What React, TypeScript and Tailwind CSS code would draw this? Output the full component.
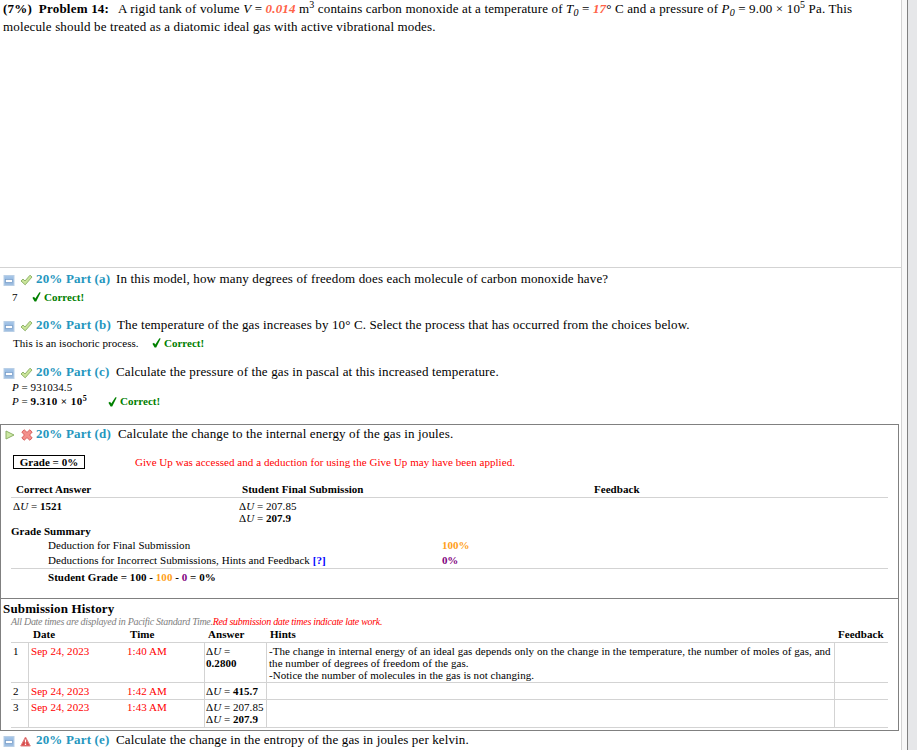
import type { ReactNode } from "react";

function CollapseIcon() {
  return (
    <svg className="block" width="12" height="11" viewBox="0 0 12 11">
      <defs>
        <linearGradient id="blue" x1="0" y1="0" x2="0" y2="1">
          <stop offset="0" stopColor="#a9c8ea" />
          <stop offset="0.6" stopColor="#8db3dc" />
          <stop offset="1" stopColor="#a5c2e2" />
        </linearGradient>
      </defs>
      <rect x="1" y="0.5" width="10" height="10" fill="url(#blue)" stroke="#b9cfe6" />
      <rect x="2.5" y="4.5" width="7" height="3" fill="#fff" stroke="#7299c6" strokeWidth="0.7" />
    </svg>
  );
}

function TickIcon() {
  return (
    <svg className="block" width="13" height="12" viewBox="0 0 13 12">
      <path d="M1 7 L3 5 L5 7 L10 1.2 L12 3 L5.2 10.8 Z" fill="#cbe59a" stroke="#91b56d" strokeWidth="1" strokeLinejoin="round" />
    </svg>
  );
}

function CrossIcon() {
  return (
    <svg className="block" width="12" height="12" viewBox="0 0 12 12">
      <path d="M3.2 .8 L6 3.4 L8.8 .8 L11.2 3 L8.6 6 L11.2 9 L8.8 11.2 L6 8.6 L3.2 11.2 L.8 9 L3.4 6 L.8 3 Z" fill="#f3908b" stroke="#d45656" strokeWidth="0.9" />
    </svg>
  );
}

function PlayIcon() {
  return (
    <svg className="ml-[1px] block" width="10" height="10" viewBox="0 0 10 10">
      <path d="M1 1 L9 5 L1 9 Z" fill="#cde9a5" stroke="#8db167" strokeLinejoin="round" />
    </svg>
  );
}

function WarnIcon() {
  return (
    <svg className="block" width="11" height="11" viewBox="0 0 11 11">
      <path d="M5.5 1 L10.3 10 H.7 Z" fill="#d94b4b" stroke="#e28080" strokeLinejoin="round" />
      <path d="M5.5 3.5 V6.5 M5.5 7.5 V9" stroke="#fff" strokeWidth="1.3" />
    </svg>
  );
}

function Correct() {
  return (
    <span className="flex items-center font-bold text-[#008000]">
      <svg className="mr-[3px]" width="9" height="10" viewBox="0 0 9 10">
        <path d="M.4 5.8 L2 4.8 L3.3 6.6 L7.4 .3 L8.7 .4 L4.2 9.6 L2.6 9.6 Z" fill="#008000" />
      </svg>
      <span className="tracking-[0px]">Correct!</span>
    </span>
  );
}

function PartRow({ first, second, label, gap, children }: { first: ReactNode; second: ReactNode; label: string; gap: string; children: ReactNode }) {
  return (
    <div className="flex h-[18px] items-center whitespace-nowrap text-[13px] leading-[18px]">
      <span className="mt-[2px] w-[17px]">{first}</span>
      <span className="mt-[2px] w-[16px]">{second}</span>
      <span className={"font-bold tracking-[0.17px] text-[#2596be] " + gap}>{label}</span>
      <span className="tracking-[0.13px]">{children}</span>
    </div>
  );
}

const DU = ({ children }: { children?: ReactNode }) => (
  <div className="h-3 whitespace-nowrap leading-3">
    Δ<i>U</i> = {children}
  </div>
);

export default function App() {
  return (
    <div className="flex h-[750px] w-[917px] overflow-hidden bg-white font-['Liberation_Serif',serif] text-[11px] tracking-[0.045px] text-black">
      <main className="w-[901px] shrink-0">
        <section className="h-[267px] pl-[3px] text-[13px] leading-[18px] whitespace-nowrap">
          <div className="h-[18px] tracking-[0.15px]">
            <b className="mr-[9px] tracking-[0.2px]">(7%)&nbsp; Problem 14:</b>
            <span>A rigid tank of volume </span>
            <i>V</i> = <i className="font-bold text-[#ff6347]">0.014</i> m<sup className="text-[10px]">3</sup> contains carbon monoxide at a temperature of <i>T<sub className="text-[10px]">0</sub></i> = <i className="font-bold text-[#ff6347]">17</i>° C and a pressure of <i>P<sub className="text-[10px]">0</sub></i> = 9.00 × 10<sup className="text-[10px]">5</sup> Pa. This
          </div>
          <div className="h-[18px] tracking-[0.14px]">molecule should be treated as a diatomic ideal gas with active vibrational modes.</div>
        </section>

        <section className="h-[157px] border-t border-[#d3d3d3] pl-[3px] pt-[2px]">
          <div className="h-[46px]">
            <PartRow first={<CollapseIcon />} second={<TickIcon />} label="20% Part (a)" gap="w-[80px]">
              <span className="tracking-[0.145px]">In this model, how many degrees of freedom does each molecule of carbon monoxide have?</span>
            </PartRow>
            <div className="flex h-[18px] items-center pl-[9px]"><span className="w-[20px]">7</span><Correct /></div>
          </div>
          <div className="h-[47px]">
            <PartRow first={<CollapseIcon />} second={<TickIcon />} label="20% Part (b)" gap="w-[81px]">
              The temperature of the gas increases by 10° C. Select the process that has occurred from the choices below.
            </PartRow>
            <div className="flex h-[18px] items-center pl-[10px]"><span className="w-[139px]">This is an isochoric process.</span><Correct /></div>
          </div>
          <div>
            <PartRow first={<CollapseIcon />} second={<TickIcon />} label="20% Part (c)" gap="w-[80px]">
              Calculate the pressure of the gas in pascal at this increased temperature.
            </PartRow>
            <div className="h-[13px] pl-[9px] leading-[13px]"><i>P</i> = 931034.5</div>
            <div className="flex h-[15px] items-center pl-[9px]">
              <span className="w-[96px] leading-[15px]"><i>P</i> = <b className="tracking-[0.45px]">9.310 × 10<sup className="text-[8px]">5</sup></b></span>
              <Correct />
            </div>
          </div>
        </section>

        <section className="h-[307px] w-[899px] border border-[#808080]">
          <div className="h-[173px]">
            <div className="pl-[3px]">
              <PartRow first={<PlayIcon />} second={<CrossIcon />} label="20% Part (d)" gap="-ml-px w-[82px]">
                Calculate the change to the internal energy of the gas in joules.
              </PartRow>
            </div>
            <div className="mt-[12px] flex h-[14px] items-center pl-[12px]">
              <b className="h-[14px] w-[72px] border border-black text-center leading-[12px]">Grade = 0%</b>
              <span className="ml-[50px] text-[#f00]">Give Up was accessed and a deduction for using the Give Up may have been applied.</span>
            </div>
            <div className="ml-[10px] mt-[12px] w-[877px]">
              <div className="grid h-[17px] grid-cols-[226px_352px_1fr] border-b border-[#d3d3d3] pl-[5px] font-bold leading-4">
                <span>Correct Answer</span><span>Student Final Submission</span><span>Feedback</span>
              </div>
              <div className="grid h-[26px] grid-cols-[226px_1fr] pl-[2px] pt-[2px]">
                <DU><b>1521</b></DU>
                <div><DU>207.85</DU><DU><b>207.9</b></DU></div>
              </div>
              <div className="h-[14px] font-bold leading-[14px]">Grade Summary</div>
              <div className="flex h-[14px] pl-[37px] leading-[14px]"><span className="w-[394px]">Deduction for Final Submission</span><span className="font-bold tracking-[0px] text-[#ffa020]">100%</span></div>
              <div className="flex h-[17px] border-b border-[#d3d3d3] pl-[37px] leading-[16px]"><span className="w-[394px]">Deductions for Incorrect Submissions, Hints and Feedback <b className="text-[#0000ff]">[?]</b></span><span className="font-bold tracking-[-0.2px] text-[#800080]">0%</span></div>
              <b className="block h-[16px] pl-[37px] leading-[16px]">Student Grade = 100 - <span className="text-[#ffa020]">100</span> - <span className="text-[#800080]">0</span> = 0%</b>
            </div>
          </div>
          <div className="border-t border-[#808080]">
            <b className="block h-[18px] pl-[2px] text-[13px] leading-[19px] tracking-[0.15px]">Submission History</b>
            <div className="h-[11px] whitespace-nowrap pl-[10px] text-[10px] italic leading-[10px] tracking-[-0.3px] text-[#808080]">All Date times are displayed in Pacific Standard Time.<span className="text-[#f00]">Red submission date times indicate late work.</span></div>
            <div className="ml-[10px] w-[877px]">
              <div className="grid h-[15px] grid-cols-[22px_97px_78px_62px_568px_50px] border-b border-[#d3d3d3] font-bold leading-[12px]">
                <span /><span>Date</span><span>Time</span><span>Answer</span><span>Hints</span><span>Feedback</span>
              </div>
              {[0, 1, 2].map((i) => (
                <div key={i} className={"grid grid-cols-[17px_97px_79px_62px_568px_54px] border-b border-[#d3d3d3] leading-3 *:pl-[2px] " + ["h-[40px] *:pt-[2px]", "h-[17px] *:pt-[2px]", "h-[28px] *:pt-[1px]"][i]}>
                  <span>{i + 1}</span>
                  <span className="border-l border-[#d3d3d3] text-[#f00]">Sep 24, 2023</span>
                  <span className="text-[#f00]">{["1:40 AM", "1:42 AM", "1:43 AM"][i]}</span>
                  <div className="border-l border-[#d3d3d3]">
                    <div className="-ml-px">
                      {i === 0 ? <><DU /><b className="block leading-3">0.2800</b></> : i === 1 ? <DU><b>415.7</b></DU> : <><DU>207.85</DU><DU><b>207.9</b></DU></>}
                    </div>
                  </div>
                  <div className="border-l border-[#d3d3d3] whitespace-nowrap">
                    {i === 0 && <>-The change in internal energy of an ideal gas depends only on the change in the temperature, the number of moles of gas, and<br />the number of degrees of freedom of the gas.<br />-Notice the number of molecules in the gas is not changing.</>}
                  </div>
                  <span className="border-l border-[#d3d3d3]" />
                </div>
              ))}
            </div>
          </div>
        </section>

        <div className="pl-[3px]">
          <PartRow first={<CollapseIcon />} second={<WarnIcon />} label="20% Part (e)" gap="w-[80px]">
            Calculate the change in the entropy of the gas in joules per kelvin.
          </PartRow>
        </div>
      </main>
      <div className="w-[7px] shrink-0 border-x border-l-[#d3d3d3] border-r-[#808080] bg-[#f8f8f8]" />
      <div className="flex-1 bg-[#e6e7e9]" />
    </div>
  );
}
